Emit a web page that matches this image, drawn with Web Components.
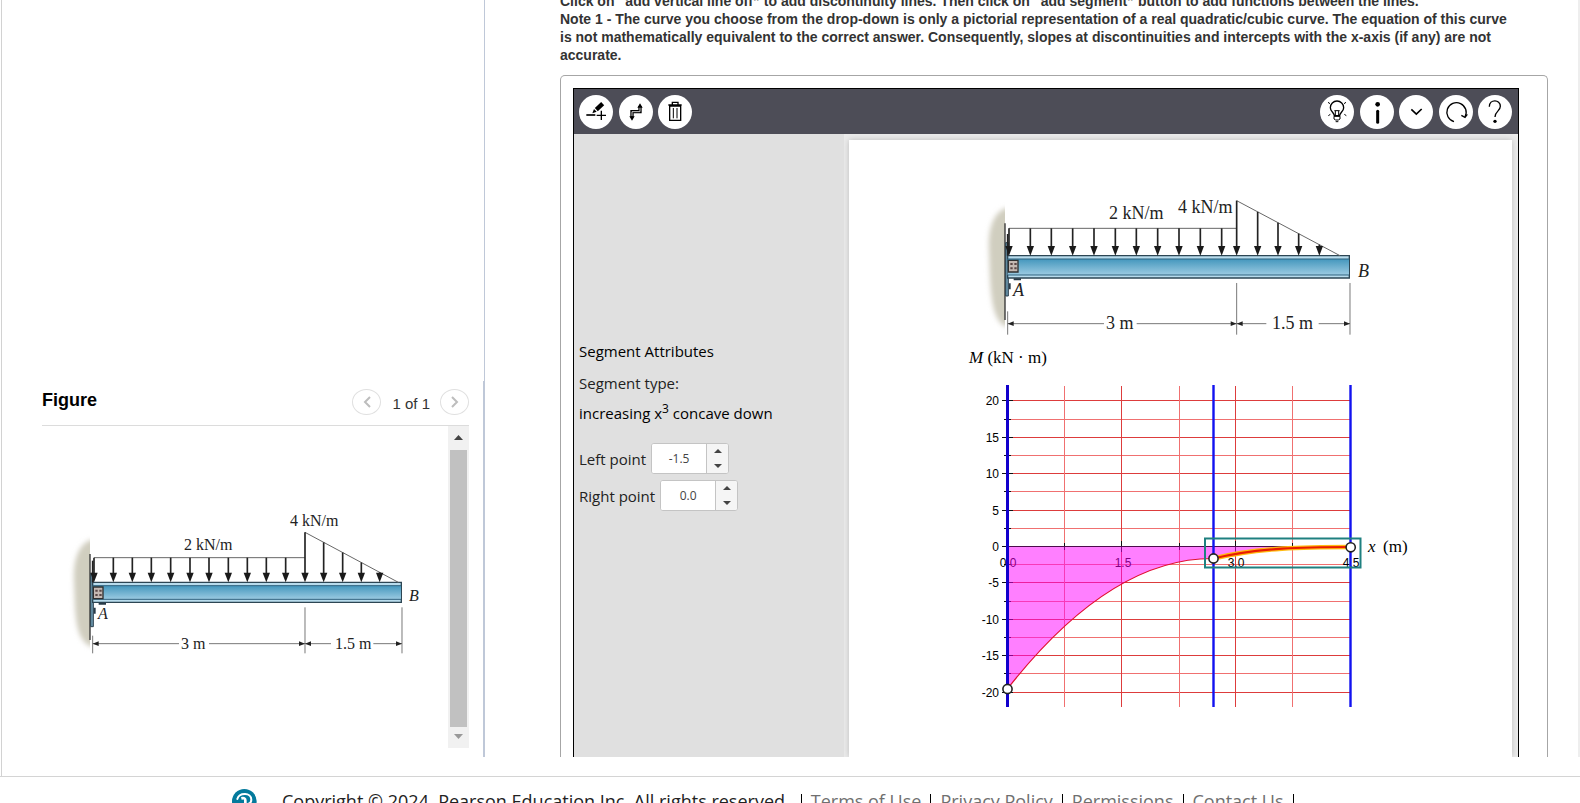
<!DOCTYPE html>
<html lang="en">
<head>
<meta charset="utf-8">
<title>Moment diagram exercise</title>
<style>
  html, body { margin: 0; height: 100%; overflow: hidden; background: #fff; }
  body { font-family: "Liberation Sans", Arial, sans-serif; color: #333; }
</style>
</head>
<body>
<exercise-page>
  <figure-pane slot="left" heading="Figure">
    <beam-diagram variant="figure"></beam-diagram>
  </figure-pane>
  <problem-pane slot="right">
    <span slot="text">Click on “add vertical line off” to add discontinuity lines. Then click on “add segment” button to add functions between the lines.<br>Note 1 - The curve you choose from the drop-down is only a pictorial representation of a real quadratic/cubic curve. The equation of this curve<br>is not mathematically equivalent to the correct answer. Consequently, slopes at discontinuities and intercepts with the x-axis (if any) are not<br>accurate.</span>
    <graph-editor>
      <segment-panel slot="side"></segment-panel>
      <beam-diagram slot="paper" variant="canvas"></beam-diagram>
      <moment-chart slot="paper"></moment-chart>
    </graph-editor>
  </problem-pane>
  <site-footer slot="footer"></site-footer>
</exercise-page>

<script>
function define(name, render) {
  customElements.define(name, class extends HTMLElement {
    connectedCallback() {
      if (this.shadowRoot) return;
      this.attachShadow({ mode: 'open' }).innerHTML = render(this);
    }
  });
}

define('exercise-page', () => `
<style>
  :host { display: flex; flex-direction: column; height: 100vh; }
  main { flex: 1; min-height: 0; display: grid; grid-template-columns: minmax(0, 485fr) minmax(0, 1095fr); grid-template-rows: minmax(0, 1fr); }
  .left { margin-left: 1px; border-left: 1px solid #d2d2d2; display: flex; flex-direction: column; padding-bottom: 19px; }
  .blank { flex: 1; border-right: 1px solid #bfc8d8; }
  .right { display: flex; min-height: 0; padding-bottom: 19px; }
  ::slotted([slot=right]) { flex: 1; min-width: 0; }
</style>
<main>
  <div class="left"><div class="blank"></div><slot name="left"></slot></div>
  <div class="right"><slot name="right"></slot></div>
</main>
<slot name="footer"></slot>`);

define('figure-pane', el => `
<style>
  :host { display: flex; flex-direction: column; box-sizing: border-box; height: 376px; padding: 0 14px 9px 40px; border-right: 2px solid #bfc8d8; }
  header { display: flex; align-items: center; height: 44px; border-bottom: 1px solid #dcdcdc; }
  h2 { margin: 0 auto 6px 0; font-size: 18px; line-height: 20px; color: #000; }
  button { width: 29px; height: 26px; margin-bottom: 2px; padding: 0; border: 1px solid #e0e0e0; border-radius: 50%; background: #fff; display: grid; place-items: center; }
  header span { font-size: 15px; line-height: 18px; margin: 2px 10px 0 11px; color: #333; }
  .body { flex: 1; min-height: 0; display: flex; }
  .view { flex: 1; min-width: 0; padding: 74px 0 0 18px; overflow: hidden; }
  .bar { width: 21px; display: flex; flex-direction: column; align-items: center; background: #f1f1f1; }
  .bar svg { flex: none; display: block; }
  .thumb { flex: 1; width: 17px; background: #c1c1c1; }
</style>
<header>
  <h2>${el.getAttribute('heading')}</h2>
  <button aria-label="Previous figure"><svg width="10" height="14" viewBox="0 0 10 14" fill="none" stroke="#bdbdbd" stroke-width="2"><path d="M8 2 3 7l5 5"/></svg></button>
  <span>1 of 1</span>
  <button aria-label="Next figure"><svg width="10" height="14" viewBox="0 0 10 14" fill="none" stroke="#bdbdbd" stroke-width="2"><path d="m2 2 5 5-5 5"/></svg></button>
</header>
<div class="body">
  <div class="view"><slot></slot></div>
  <div class="bar">
    <svg width="21" height="24"><path d="M6 14h9l-4.500-5z" fill="#444"/></svg>
    <div class="thumb"></div>
    <svg width="21" height="21"><path d="M6 7h9l-4.500 5z" fill="#999"/></svg>
  </div>
</div>`);

/* Shape coordinates are thirds of a pixel; labels are in pixels. */
const BEAMS = {
  figure: {
    w: 370, h: 170, x0: 98, x1: 735, x2: 1026, top: 247, bottom: 307, load: 173, peak: 97, tail: 1015,
    uniform: [102,160,217,274,332,390,447,505,562,619,677], ramp: [735,791,848,904,959],
    wallTop: 120, wallBottom: 445, plateTop: 162, plateBottom: 420, dim: 431, dimTop: 322, dimBottom: 460,
    gaps: [357, 447, 815, 940],
    font: 16, labels: [[124,50,'2 kN/m'],[230,26,'4 kN/m'],[121,149,'3 m'],[275,149,'1.5 m']], italics: [[38,119,'A'],[349,101,'B']]
  },
  canvas: {
    w: 441, h: 165, x0: 143, x1: 830, x2: 1170, top: 227, bottom: 294, load: 145, peak: 62, tail: 1140,
    uniform: [147,211,274,338,402,466,529,593,657,721,785], ramp: [830,893,954,1016,1078],
    wallTop: 85, wallBottom: 445, plateTop: 130, plateBottom: 420, dim: 431, dimTop: 309, dimBottom: 464,
    gaps: [432, 530, 921, 1076],
    font: 18, labels: [[149,39,'2 kN/m'],[218,33,'4 kN/m'],[146,149,'3 m'],[312,149,'1.5 m']], italics: [[53,116,'A'],[398,97,'B']]
  }
};
define('beam-diagram', el => {
  const b = BEAMS[el.getAttribute('variant')];
  const arrow = (x, y) => `<path d="M${x} ${y}V${b.top - 14}" stroke="#222" stroke-width="5"/><path d="M${x - 11} ${b.top - 29}h22l-11 29z" fill="#1a1a1a"/>`;
  const slope = (b.top - b.peak) / (b.tail - b.x1);
  const arrows = b.uniform.map(x => arrow(x, b.load)).join('') + b.ramp.map(x => arrow(x, b.peak + (x - b.x1) * slope)).join('');
  const head = (x, d) => `<path d="M${x} ${b.dim}l${d * 18} -7v14z" fill="#222"/>`;
  const w = b.x0 - 8;
  return `
<style>
  :host { display: block; }
  svg { display: block; overflow: visible; font-family: "Liberation Serif", "Times New Roman", serif; font-size: ${b.font}px; fill: #222; }
</style>
<svg width="${b.w}" height="${b.h}" role="img" aria-label="Cantilever beam with distributed loads">
  <defs>
    <linearGradient id="web" x1="0" y1="0" x2="0" y2="1"><stop offset="0" stop-color="#4497bd"/><stop offset="1" stop-color="#9ccbe2"/></linearGradient>
    <filter id="soft" x="-40%" y="-10%" width="180%" height="120%"><feGaussianBlur stdDeviation="8"/></filter>
    <clipPath id="half"><path d="M-20 0H${w}V600H-20z"/></clipPath>
  </defs>
  <g transform="scale(.33333)">
    <g clip-path="url(#half)"><path d="M${w + 30} ${b.wallTop}H${w}C${w - 30} ${b.wallTop + 14} ${w - 52} ${b.wallTop + 50} ${w - 48} ${b.wallTop + 130}S${w - 48} ${b.wallBottom - 30} ${w} ${b.wallBottom - 6}H${w + 30}z" fill="#d0cebf" filter="url(#soft)"/></g>
    <path d="M${w} ${b.plateTop}V${b.plateBottom}" stroke="#333" stroke-width="4"/>
    <path d="M${w + 2} ${b.plateTop + 58}h8v160h-8z" fill="#6c97ae" stroke="#2a3f4c" stroke-width="3"/>
    <path d="M${b.x0} ${b.top}H${b.x2 - 2}V${b.bottom}H${b.x0}z" fill="#b8dced" stroke="#2d4654" stroke-width="4"/>
    <path d="M${b.x0} ${b.top + 10}H${b.x2 - 3}V${b.bottom - 9}H${b.x0}z" fill="url(#web)"/>
    <path d="M${b.x0} ${b.top + 10}H${b.x2 - 3}M${b.x0} ${b.bottom - 9}H${b.x2 - 3}" stroke="#2f627e" stroke-width="3"/>
    <path d="M${b.x0 + 2} ${b.top + 14}h29v35h-29z" fill="#c4b8b2" stroke="#303030" stroke-width="4"/>
    <path d="M${b.x0 + 8} ${b.top + 25}h7m5 0h7M${b.x0 + 8} ${b.top + 38}h7m5 0h7" stroke="#5b4848" stroke-width="6"/>
    <path d="M${b.x0 + 18} ${b.bottom + 4}h22M${b.x0 + 6} ${b.bottom + 16}v18" fill="none" stroke="#293b48" stroke-width="6"/>
    <path d="M${b.x0} ${b.top - 65}V${b.top}" stroke="#222" stroke-width="5"/>
    <path d="M${b.x0 + 4} ${b.load}H${b.x1}M${b.x1} ${b.peak}L${b.tail} ${b.top}" fill="none" stroke="#666" stroke-width="3"/>
    ${arrows}
    <g stroke="#777" stroke-width="3">
      <path d="M${b.x0} ${b.bottom + 100}V${b.dimBottom}M${b.x1} ${b.dimTop}V${b.dimBottom}M${b.x2} ${b.dimTop}V${b.dimBottom}"/>
      <path d="M${b.x0} ${b.dim}H${b.gaps[0]}M${b.gaps[1]} ${b.dim}H${b.gaps[2] - 2}M${b.gaps[3]} ${b.dim}H${b.x2}"/>
    </g>
    ${head(b.x0, 1)}${head(b.x1, -1)}${head(b.x1, 1)}${head(b.x2, -1)}
  </g>
  ${b.labels.map(([x, y, t]) => `<text x="${x}" y="${y}">${t}</text>`).join('')}
  ${b.italics.map(([x, y, t]) => `<text x="${x}" y="${y}" font-style="italic">${t}</text>`).join('')}
</svg>`;
});

define('problem-pane', () => `
<style>
  :host { display: flex; flex-direction: column; box-sizing: border-box; padding: 0 30px 0 75px; border-right: 2px solid #eee; overflow: hidden; }
  p { margin: -8px 0 11px; font-size: 14px; line-height: 18px; font-weight: bold; }
  .card { flex: 1; min-height: 0; display: flex; padding: 12px 28px 0 12px; border: 1px solid #a6a6a6; border-bottom: 0; border-radius: 5px 5px 0 0; }
  ::slotted(graph-editor) { flex: 1; min-width: 0; }
</style>
<p><slot name="text"></slot></p>
<div class="card"><slot></slot></div>`);

const ICONS = {
  'Add segment': '<path d="M40 55l5-13 8 8z" fill="#000" stroke="none"/><path d="M52 44l19-18" stroke-width="13"/><path d="M22 60h27" stroke-width="5"/><path d="M67 47v28M53 61h28" stroke-width="4"/>',
  'Add vertical line off': '<path d="M39 66V50h24V34" stroke-width="10"/><path d="M39 64V50h24V36" stroke="#ccc" stroke-width="3"/><path d="M31 64h16l-8 13zM55 38h16l-8-13z" fill="#000" stroke="none"/>',
  'Delete': '<path d="M31 30h40M43 29v-7h17v7M35 33h33v43H35z" stroke-width="4"/><path d="M46 39v31M57 39v31" stroke-width="3"/>',
  'Hints': '<path d="M43 62c0-9-12-12-12-24a20 20 0 0 1 40 0c0 12-12 15-12 24z" stroke-width="4"/><path d="M43 47h16M46 48v13M56 48v13M42 64h18v8l-5 3h-8l-5-3zM47 80h8" stroke-width="3"/><path d="M24 22l6 4M78 22l-6 4M25 62l6-4M79 62l-6-4" stroke-width="3"/>',
  'Information': '<circle cx="53" cy="28" r="7" fill="#000" stroke="none"/><path d="M53 49v33" stroke-width="9" stroke-linecap="round"/>',
  'More': '<path d="m37 43 15 14 16-15" stroke-width="5"/>',
  'Reset': '<path d="M45 80A29 29 0 1 1 78 66" stroke-width="4"/><path d="m67 61 11 6 7-9" stroke-width="4"/>',
  'Help': '<path d="M34 35C34 12 67 12 67 34c0 15-16 14-16 32" stroke-width="4"/><circle cx="51" cy="79" r="5" fill="#000" stroke="none"/>'
};
define('tool-button', el => `
<style>
  :host { display: block; }
  button { display: block; width: 34px; height: 34px; padding: 0; border: 0; border-radius: 50%; background: #fff; }
  svg { display: block; }
</style>
<button aria-label="${el.getAttribute('name')}"><svg width="34" height="34" viewBox="0 0 102 102" fill="none" stroke="#000">${ICONS[el.getAttribute('name')]}</svg></button>`);

define('graph-editor', () => `
<style>
  :host { display: flex; flex-direction: column; box-sizing: border-box; border: 1px solid #000; border-bottom: 0; }
  nav { display: flex; align-items: center; justify-content: space-between; height: 45px; padding: 0 6px 0 5px; background: #4d4d57; }
  nav div { display: flex; justify-content: space-between; width: 113px; }
  nav div + div { width: 192px; }
  .work { flex: 1; min-height: 0; display: flex; background: #ebebeb; }
  ::slotted(segment-panel) { flex: 0 0 270px; }
  .area { flex: 1; min-width: 0; display: flex; padding: 6px 6px 0 5px; overflow: hidden; }
  .paper { flex: 1; min-width: 0; background: #fff; box-shadow: 0 0 6px #bbb; display: flex; flex-direction: column; align-items: center; padding-top: 40px; }
  ::slotted([slot=paper]) { flex: none; }
</style>
<nav>
  <div><tool-button name="Add segment"></tool-button><tool-button name="Add vertical line off"></tool-button><tool-button name="Delete"></tool-button></div>
  <div><tool-button name="Hints"></tool-button><tool-button name="Information"></tool-button><tool-button name="More"></tool-button><tool-button name="Reset"></tool-button><tool-button name="Help"></tool-button></div>
</nav>
<div class="work">
  <slot name="side"></slot>
  <div class="area"><div class="paper"><slot name="paper"></slot></div></div>
</div>`);

define('point-field', el => `
<style>
  :host { display: flex; align-items: center; gap: 5px; height: 31px; }
  label { font-size: 15px; line-height: 20px; color: #222; }
  .box { display: flex; height: 29px; border: 1px solid #c4c4c4; border-radius: 3px; background: #fff; overflow: hidden; }
  input { width: 54px; box-sizing: border-box; border: 0; padding: 0; background: #fff; text-align: center; font: 12px "Open Sans", sans-serif; color: #444; }
  .spin { width: 21px; display: flex; flex-direction: column; border-left: 1px solid #c4c4c4; background: #f5f5f5; }
  button { flex: 1; border: 0; padding: 0; background: none; display: grid; place-items: center; }
  svg { display: block; }
</style>
<label for="v">${el.getAttribute('label')}</label>
<div class="box">
  <input id="v" value="${el.getAttribute('value')}">
  <div class="spin">
    <button aria-label="Increase"><svg width="8" height="4"><path d="M0 4h8L4 0z" fill="#444"/></svg></button>
    <button aria-label="Decrease"><svg width="8" height="4"><path d="M0 0h8L4 4z" fill="#444"/></svg></button>
  </div>
</div>`);

define('segment-panel', () => `
<style>
  :host { display: block; box-sizing: border-box; padding: 205px 5px 0; background: #e0e0e0; font-family: "Open Sans", "Noto Sans", sans-serif; font-size: 15px; line-height: 24px; color: #000; overflow: hidden; }
  p { margin: 0 0 6px; }
  .title { margin-bottom: 8px; }
  .type { color: #222; }
  sup { font-size: 12px; line-height: 0; }
  point-field { margin-bottom: 6px; }
  .kind { margin-bottom: 18px; }
</style>
<p class="title">Segment Attributes</p>
<p class="type">Segment type:</p>
<p class="kind">increasing x<sup>3</sup> concave down</p>
<point-field label="Left point" value="-1.5"></point-field>
<point-field label="Right point" value="0.0"></point-field>`);

define('moment-chart', () => {
  const rows = [400,419,437,455,473,491,510,528,546,564,582,601,619,637,655,673,692];
  const cols = [1064,1121,1179,1235,1292];
  const grid = rows.map((y, i) => `<path d="M1007 ${y + .5}H1351" stroke="${i % 2 ? '#f07070' : '#dd3c3c'}"/>`).join('')
    + cols.map((x, i) => `<path d="M${x + .5} 386V707" stroke="${i % 2 ? '#dd3c3c' : '#f07070'}"/>`).join('');
  const ticks = rows.map((y, i) => `<path d="M${i % 2 ? 1004 : 1002} ${y + .5}h${i % 2 ? 7 : 11}"/>`).join('')
    + cols.map((x, i) => `<path d="M${x + .5} ${i % 2 ? 541 : 543}v${i % 2 ? 11 : 7}"/>`).join('');
  const yl = rows.filter((_, i) => i % 2 === 0).map((y, i) => `<text x="999" y="${y + 5}" text-anchor="end">${20 - 5 * i}</text>`).join('');
  const xl = [[1008,'0.0'],[1123,'1.5'],[1236,'3.0'],[1351,'4.5']].map(([x, t]) => `<text x="${x}" y="567" text-anchor="middle">${t}</text>`).join('');
  const c1 = 'M1007.300 689Q1110 558 1213.300 558.500', c2 = 'M1213.300 558.500C1259 547.500 1305 547 1350.700 547';
  const dot = (x, y) => `<circle cx="${x}" cy="${y}" r="4.600" fill="#fff" stroke="#222" stroke-width="1.600"/>`;
  return `
<style>
  :host { display: block; }
  svg { display: block; overflow: visible; font-family: "Liberation Sans", Arial, sans-serif; font-size: 12px; fill: #000; }
  .math { font-family: "Liberation Serif", serif; font-size: 17px; }
</style>
<svg width="461" height="370" viewBox="950 345 461 370" role="img" aria-label="Bending moment diagram">
  <text class="math" x="969" y="363"><tspan font-style="italic">M</tspan> (kN · m)</text>
  <g fill="none">${grid}</g>
  ${yl}${xl}
  <path d="M1007 546.500H1351" stroke="#111"/>
  <g stroke="#111">${ticks}</g>
  <path d="${c1}V546.500H1007.300z" fill="#f0f" fill-opacity=".5"/>
  <path d="${c2}V546.500H1213.300z" fill="#f0f" fill-opacity=".5"/>
  <path d="${c1}" fill="none" stroke="#e01030" stroke-width="1.200"/>
  <path d="M1007.500 385V707" stroke="#10c" stroke-width="3"/>
  <path d="M1213.500 385V707M1350.500 385V707" stroke="#1212f0" stroke-width="2.400"/>
  <path d="${c2}" fill="none" stroke="#fb1" stroke-width="4.600"/>
  <path d="${c2}" fill="none" stroke="#e91c00" stroke-width="2.200"/>
  <path d="M1205 538.500h155.500v29H1205z" fill="none" stroke="#1f8080" stroke-width="2"/>
  ${dot(1007.5, 689)}${dot(1213.5, 558.5)}${dot(1350.7, 547.3)}
  <text class="math" x="1368" y="552"><tspan font-style="italic">x</tspan> <tspan x="1383">(m)</tspan></text>
</svg>`;
});

define('site-footer', () => `
<style>
  :host { display: block; box-sizing: border-box; height: 27px; border-top: 1px solid #d4d4d4; overflow: hidden; font-family: "Open Sans", sans-serif; font-size: 18px; line-height: 24px; color: #222; background: #fff; }
  .row { display: flex; align-items: flex-start; padding: 12px 0 0 232px; }
  svg { display: block; flex: none; margin-right: 25px; }
  .row > * { white-space: pre; }
  .copy { padding-right: 11px; }
  a { color: #6f6f6f; text-decoration: none; padding: 0 9px; }
  i { width: 1px; height: 20px; margin-top: 5px; background: #000; }
</style>
<div class="row">
  <svg width="25" height="25" viewBox="0 0 75 75"><circle cx="37" cy="37" r="37" fill="#047a9c"/><path d="M16 30C22 10 58 10 58 32c0 10-8 14-18 14" fill="none" stroke="#fff" stroke-width="6" stroke-linecap="round"/><path d="M28 28c8-2 12 0 12 6v14" fill="none" stroke="#fff" stroke-width="8"/></svg>
  <span class="copy">Copyright © 2024  Pearson Education Inc. All rights reserved.</span>
  <i></i><a href="#terms">Terms of Use</a><i></i><a href="#privacy">Privacy Policy</a><i></i><a href="#permissions">Permissions</a><i></i><a href="#contact">Contact Us</a><i></i>
</div>`);
</script>
</body>
</html>
